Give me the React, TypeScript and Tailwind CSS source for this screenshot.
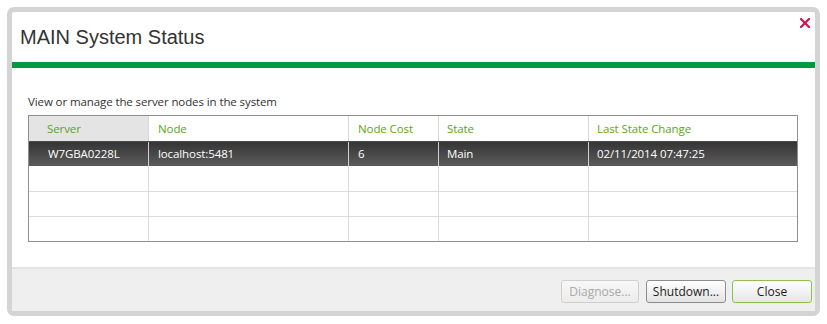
import React from "react";

const cols = [
  { w: "w-[119px]", label: "Server", pad: "pl-[18px]" },
  { w: "w-[200px]", label: "Node", pad: "pl-[9px]" },
  { w: "w-[90px]", label: "Node Cost", pad: "pl-[9px]" },
  { w: "w-[150px]", label: "State", pad: "pl-[8px]" },
  { w: "w-[209px]", label: "Last State Change", pad: "pl-[8px]" },
];

const row = ["W7GBA0228L", "localhost:5481", "6", "Main", "02/11/2014 07:47:25"];

function Btn({
  children,
  kind,
}: {
  children: React.ReactNode;
  kind: "disabled" | "normal" | "primary";
}) {
  const base =
    "h-[23px] rounded-[3px] border text-[12px] flex items-center justify-center bg-gradient-to-b";
  const k =
    kind === "disabled"
      ? "w-[78px] border-[#cfcfcf] text-[#a8a8a8] from-[#f7f7f7] to-[#ececec]"
      : kind === "normal"
      ? "w-[80px] ml-[1px] border-[#8c8c8c] text-[#222] from-[#ffffff] to-[#e4e4e4]"
      : "w-[80px] border-[#8cc152] text-[#222] from-[#ffffff] to-[#e6e6e6]";
  return <div className={`${base} ${k}`}>{children}</div>;
}

export default function App() {
  return (
    <div
      className="w-[827px] h-[324px] bg-white pt-[7px] pl-[7px]"
      style={{ fontFamily: '"Open Sans", "Noto Sans", sans-serif' }}
    >
      <div className="w-[813px] h-[309px] border-[5px] border-[#d4d4d4] rounded-[7px] bg-white flex flex-col overflow-hidden">
        <div className="relative h-[50px] flex items-center pl-[8px]">
          <span
            className="text-[20px] text-[#333]"
            style={{ fontFamily: '"Liberation Sans", Arial, sans-serif' }}
          >
            MAIN System Status
          </span>
          <svg
            className="absolute right-[5px] top-[6px]"
            width="10"
            height="10"
            viewBox="0 0 10 10"
          >
            <path d="M1 1 L9 9 M9 1 L1 9" stroke="#d0134f" strokeWidth="2.2" strokeLinecap="square" />
          </svg>
        </div>
        <div className="h-[6px] bg-[#009a3f]" />
        <div className="flex-1 flex flex-col pl-[16px] pr-[17px] pt-[26px]">
          <div className="h-[16px] text-[11.5px] leading-[16px] text-[#333] tracking-[-0.1px]">
            View or manage the server nodes in the system
          </div>
          <div className="mt-[5px] border border-[#8e8e93] w-[770px] text-[11.5px] tracking-[-0.1px]">
            <div className="flex h-[25px]">
              {cols.map((c, i) => (
                <div
                  key={c.label}
                  className={`${c.w} ${c.pad} h-full flex items-center pt-[1px] text-[#5aa80f] ${
                    i === 0 ? "bg-[#e4e4e4]" : "border-l border-[#d8d8d8]"
                  }`}
                >
                  {c.label}
                </div>
              ))}
            </div>
            <div className="flex h-[25px] bg-gradient-to-b from-[#353535] to-[#5c5c5c] border-t border-[#4a4a4a]">
              {cols.map((c, i) => (
                <div
                  key={c.label}
                  className={`${c.w} ${i === 0 ? "pl-[19px]" : c.pad} h-full flex items-center text-white ${
                    i === 0 ? "" : "border-l border-[#cfcfcf]"
                  }`}
                >
                  {row[i]}
                </div>
              ))}
            </div>
            {[0, 1, 2].map((r) => (
              <div
                key={r}
                className={`flex h-[25px] ${r > 0 ? "border-t border-[#dcdcdc]" : ""}`}
              >
                {cols.map((c, i) => (
                  <div
                    key={c.label}
                    className={`${c.w} h-full ${i === 0 ? "" : "border-l border-[#dcdcdc]"}`}
                  />
                ))}
              </div>
            ))}
          </div>
        </div>
        <div className="h-[44px] border-t-2 border-[#e4e4e4] bg-[#efefef] flex justify-end items-start pt-[11px] pr-[3px] gap-[6px]">
          <Btn kind="disabled">Diagnose...</Btn>
          <Btn kind="normal">Shutdown...</Btn>
          <Btn kind="primary">Close</Btn>
        </div>
      </div>
    </div>
  );
}
